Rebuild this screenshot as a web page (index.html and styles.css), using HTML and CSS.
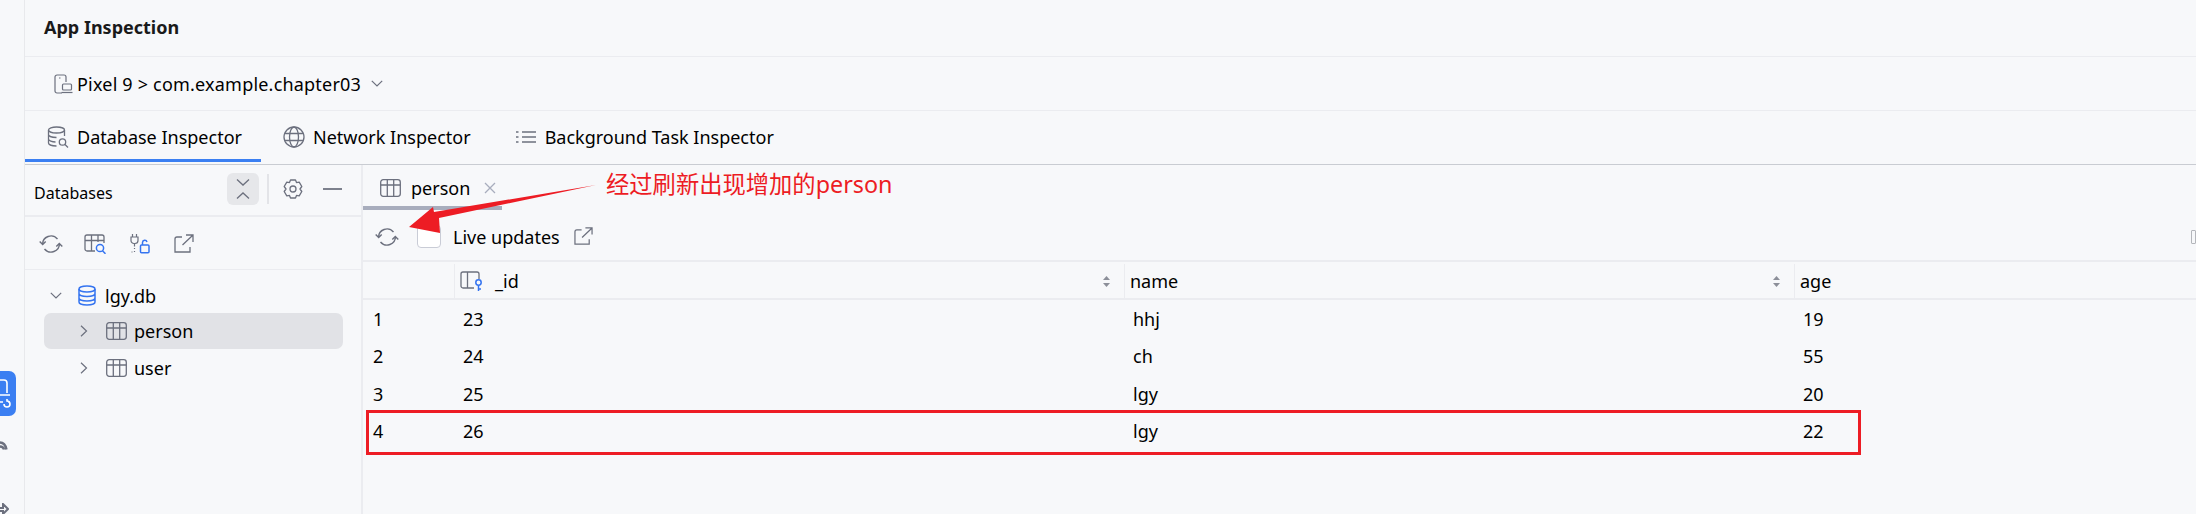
FILE: index.html
```html
<!DOCTYPE html>
<html lang="en">
<head>
<meta charset="utf-8">
<title>App Inspection</title>
<link rel="stylesheet" href="styles.css">
</head>
<body>
<div class="app">
  <aside class="rail">
    <div class="rail-active">
      <svg class="rail-svg" width="16" height="45" viewBox="0 0 16 45"><path d="M0 9h4c2 0 3 1 3 3v10M0 24h10M0 31h3M7 28v2a3 3 0 1 1-3 3M10 31h-2" fill="none" stroke="#fff" stroke-width="1.6"/></svg>
    </div>
    <svg class="rail-icon-a" width="8" height="12" viewBox="0 0 8 12"><path d="M0 2.500c3 0 5.500 2 6.500 7M0 6.500c2 0 3.500 1 4 3" fill="none" stroke="#6c707e" stroke-width="2.400"/></svg>
    <svg class="rail-icon-b" width="9" height="12" viewBox="0 0 9 12"><path d="M0 5h3V1l5 5-5 5V8H0" fill="none" stroke="#6c707e" stroke-width="2"/></svg>
  </aside>

  <main class="main">
    <header class="title-row"><h1 class="title">App Inspection</h1></header>

    <div class="device-row">
      <svg class="ic-device" width="19" height="20" viewBox="0 0 19 20"><path d="M8 19H3a2 2 0 0 1-2-2V3a2 2 0 0 1 2-2h7a2 2 0 0 1 2 2v5M5 4h1.500" fill="none" stroke="#6c707e" stroke-width="1.200"/><rect x="8.500" y="10" width="9" height="6" rx="1" fill="none" stroke="#6c707e" stroke-width="1.200"/><path d="M7.500 18.500h11" stroke="#6c707e" stroke-width="1.200"/></svg>
      <span class="device-text">Pixel 9 &gt; com.example.chapter03</span>
      <svg class="ic-chev" width="12" height="7" viewBox="0 0 12 7"><path d="M.8.8 6 6l5.200-5.200" fill="none" stroke="#6c707e" stroke-width="1.200"/></svg>
    </div>

    <nav class="tabs">
      <div class="tab tab-active">
        <svg width="22" height="22" viewBox="0 0 22 22"><ellipse cx="9.500" cy="4" rx="8" ry="3" fill="none" stroke="#6c707e" stroke-width="1.300"/><path d="M1.500 4v13c0 1.700 3.600 3 8 3M1.500 8.500c0 1.700 3.600 3 8 3M1.500 13c0 1.700 3.600 3 7 3M17.500 4v6" fill="none" stroke="#6c707e" stroke-width="1.300"/><circle cx="15.500" cy="16" r="3.200" fill="#f7f8fa" stroke="#6c707e" stroke-width="1.300"/><path d="m18 18.500 3 3" stroke="#6c707e" stroke-width="1.300"/></svg>
        <span>Database Inspector</span>
      </div>
      <div class="tab">
        <svg width="22" height="22" viewBox="0 0 22 22"><g fill="none" stroke="#6c707e" stroke-width="1.300"><circle cx="11" cy="11" r="10"/><ellipse cx="11" cy="11" rx="4.500" ry="10"/><path d="M1.800 7.500h18.400M1.800 14.500h18.400"/></g></svg>
        <span>Network Inspector</span>
      </div>
      <div class="tab">
        <svg width="22" height="22" viewBox="0 0 22 22"><g stroke="#6c707e" stroke-width="1.400"><path d="M1 6h2.500M1 11h2.500M1 16h2.500M7 6h14M7 11h14M7 16h14"/></g></svg>
        <span>Background Task Inspector</span>
      </div>
    </nav>

    <div class="body">
      <section class="left">
        <div class="db-head">
          <span class="db-title">Databases</span>
          <div class="db-actions">
            <span class="collapse"><svg width="14" height="22" viewBox="0 0 14 22"><path d="m1 1.500 6 5.500 6-5.500M1 20.500l6-5.500 6 5.500" fill="none" stroke="#6c707e" stroke-width="1.300"/></svg></span>
            <span class="vsep"></span>
            <svg class="ic-gear" width="20" height="20" viewBox="0 0 20 20"><path d="M7.500 1h5l1 2.600 2.700-.5L18.800 7.500 17 10l1.800 2.500-2.600 4.400-2.700-.5-1 2.600h-5l-1-2.600-2.700.5-2.600-4.400L3 10 1.200 7.500l2.600-4.400 2.700.5z" fill="none" stroke="#6c707e" stroke-width="1.300" stroke-linejoin="round"/><circle cx="10" cy="10" r="3" fill="none" stroke="#6c707e" stroke-width="1.300"/></svg>
            <span class="minus"></span>
          </div>
        </div>
        <div class="db-tools">
          <svg width="24" height="20" viewBox="0 0 24 20"><path d="M3.500 10.500a8.500 8.500 0 0 1 15-5.500M20.500 9.500a8.500 8.500 0 0 1-15 5.500M.7 7.500l3 3 3-3M17.300 12.500l3-3 3 3" fill="none" stroke="#6c707e" stroke-width="1.400"/></svg>
          <svg width="23" height="20" viewBox="0 0 23 20"><path d="M11 17H3a2 2 0 0 1-2-2V3a2 2 0 0 1 2-2h15a2 2 0 0 1 2 2v6M1 6.500h19M7.500 1v16M14 1v7" fill="none" stroke="#6c707e" stroke-width="1.300"/><circle cx="16" cy="14" r="3.600" fill="none" stroke="#3574f0" stroke-width="1.500"/><path d="m18.500 16.800 3 3" stroke="#3574f0" stroke-width="1.500"/></svg>
          <svg width="20" height="20" viewBox="0 0 20 20"><path d="M2.500 0v3M6.500 0v3M1 3h7v3.500a3 3 0 0 1-3 3h-1a3 3 0 0 1-3-3zM4.500 9.500v3M4.500 14v1M4.500 17v1M1.500 18h1" fill="none" stroke="#6c707e" stroke-width="1.200"/><rect x="10.500" y="11" width="8.500" height="7.800" rx="1" fill="none" stroke="#3574f0" stroke-width="1.500"/><path d="M12.500 11V8.500a2.300 2.300 0 0 1 4.500-.5" fill="none" stroke="#3574f0" stroke-width="1.500"/></svg>
          <svg width="20" height="20" viewBox="0 0 20 20"><path d="M8 3H3a2 2 0 0 0-2 2v13h15v-5M8.500 11 19 1M12 1h7v7" fill="none" stroke="#6c707e" stroke-width="1.300"/></svg>
        </div>
        <div class="tree">
          <div class="node node-db">
            <svg class="chev" width="12" height="7" viewBox="0 0 12 7"><path d="M.8.8 6 6l5.200-5.200" fill="none" stroke="#6c707e" stroke-width="1.200"/></svg>
            <svg width="18" height="21" viewBox="0 0 18 21"><g fill="none" stroke="#3574f0" stroke-width="1.500"><ellipse cx="9" cy="4" rx="8" ry="3"/><path d="M1 4v13c0 1.700 3.600 3 8 3s8-1.300 8-3V4M1 8.500c0 1.700 3.600 3 8 3s8-1.300 8-3M1 13c0 1.700 3.600 3 8 3s8-1.300 8-3"/></g></svg>
            <span>lgy.db</span>
          </div>
          <div class="node node-table node-selected">
            <svg class="chev-r" width="8" height="12" viewBox="0 0 8 12"><path d="m1 .8 5.500 5.200L1 11.200" fill="none" stroke="#6c707e" stroke-width="1.200"/></svg>
            <svg class="ic-table" width="21" height="18" viewBox="0 0 21 18"><use href="#tbl"/></svg>
            <span>person</span>
          </div>
          <div class="node node-table">
            <svg class="chev-r" width="8" height="12" viewBox="0 0 8 12"><path d="m1 .8 5.500 5.200L1 11.200" fill="none" stroke="#6c707e" stroke-width="1.200"/></svg>
            <svg class="ic-table" width="21" height="18" viewBox="0 0 21 18"><use href="#tbl"/></svg>
            <span>user</span>
          </div>
        </div>
      </section>

      <section class="right">
        <div class="doc-tabs">
          <div class="doc-tab">
            <svg class="ic-table" width="21" height="18" viewBox="0 0 21 18"><use href="#tbl"/></svg>
            <span>person</span>
            <svg class="ic-close" width="12" height="12" viewBox="0 0 12 12"><path d="m1 1 10 10M11 1 1 11" stroke="#a8adbd" stroke-width="1.300"/></svg>
          </div>
        </div>
        <div class="doc-tools">
          <svg width="24" height="20" viewBox="0 0 24 20"><path d="M3.500 10.500a8.500 8.500 0 0 1 15-5.500M20.500 9.500a8.500 8.500 0 0 1-15 5.500M.7 7.500l3 3 3-3M17.300 12.500l3-3 3 3" fill="none" stroke="#6c707e" stroke-width="1.400"/></svg>
          <span class="checkbox"></span>
          <span class="live">Live updates</span>
          <svg width="19" height="19" viewBox="0 0 20 20"><path d="M8 3H3a2 2 0 0 0-2 2v13h15v-5M8.500 11 19 1M12 1h7v7" fill="none" stroke="#6c707e" stroke-width="1.300"/></svg>
          <span class="handle"></span>
        </div>
        <div class="grid grid-head">
          <div class="cell"></div>
          <div class="cell head-cell">
            <svg class="ic-key" width="24" height="20" viewBox="0 0 24 20"><path d="M14 17H3a2 2 0 0 1-2-2V3a2 2 0 0 1 2-2h14a2 2 0 0 1 2 2v5M7.500 1v16" fill="none" stroke="#6c707e" stroke-width="1.300"/><circle cx="18.500" cy="11.500" r="2.700" fill="none" stroke="#3574f0" stroke-width="1.500"/><path d="M18.500 14.200V20M18.500 18h2.500" stroke="#3574f0" stroke-width="1.500"/></svg>
            <span class="id-label">_id</span>
            <svg class="ic-sort" width="7" height="11" viewBox="0 0 7 11"><path d="M3.500 0 7 4H0zM3.500 11 0 7h7z" fill="#8c8f99"/></svg>
          </div>
          <div class="cell head-cell">
            <span>name</span>
            <svg class="ic-sort" width="7" height="11" viewBox="0 0 7 11"><path d="M3.500 0 7 4H0zM3.500 11 0 7h7z" fill="#8c8f99"/></svg>
          </div>
          <div class="cell head-cell"><span>age</span></div>
        </div>
        <div class="grid row"><div class="cell num">1</div><div class="cell val">23</div><div class="cell val">hhj</div><div class="cell val">19</div></div>
        <div class="grid row"><div class="cell num">2</div><div class="cell val">24</div><div class="cell val">ch</div><div class="cell val">55</div></div>
        <div class="grid row"><div class="cell num">3</div><div class="cell val">25</div><div class="cell val">lgy</div><div class="cell val">20</div></div>
        <div class="grid row"><div class="cell num">4</div><div class="cell val">26</div><div class="cell val">lgy</div><div class="cell val">22</div></div>
      </section>
    </div>
  </main>
</div>

<svg class="defs" width="0" height="0"><defs><g id="tbl" fill="none" stroke="#6c707e" stroke-width="1.300"><rect x=".7" y=".7" width="19.600" height="16.600" rx="2.500"/><path d="M.7 6h19.600M7.300.7v16.600M13.700.7v16.600"/></g></defs></svg>

<div class="note-box"></div>
<svg class="note-arrow" width="200" height="60" viewBox="0 0 200 60"><path d="M2 42 26 22 27 27 189 0 32 33 33 48z" fill="#ed1c24"/></svg>
<div class="note-text">经过刷新出现增加的person</div>
</body>
</html>
```
FILE: styles.css
```css
* { box-sizing: border-box; }
html, body { margin: 0; height: 514px; overflow: hidden; }
body {
  position: relative;
  width: 2196px;
  background: #f7f8fa;
  color: #000;
  font-family: "Noto Sans", "Noto Sans CJK SC", sans-serif;
  font-size: 18px;
}
svg { display: block; flex: none; }
.defs { position: absolute; }

.app { display: flex; height: 514px; }

.rail { width: 25px; flex: none; border-right: 1px solid #e8e9ec; padding-top: 371px; overflow: hidden; }
.rail-active { width: 16px; height: 45px; background: #3b7ff2; border-radius: 0 7px 7px 0; }
.rail-icon-a { margin-top: 24px; }
.rail-icon-b { margin-top: 51px; }

.main { flex: 1; min-width: 0; display: flex; flex-direction: column; }

.title-row { height: 57px; flex: none; border-bottom: 1px solid #ebecf0; padding: 0 0 2px 19px; display: flex; align-items: center; }
.title { margin: 0; font-size: 18px; font-weight: 700; color: #1a1a1a; }

.device-row { height: 54px; flex: none; border-bottom: 1px solid #ebecf0; padding-left: 29px; display: flex; align-items: center; }
.device-text { margin-left: 4px; letter-spacing: 0.2px; }
.ic-chev { margin-left: 10px; }

.tabs { height: 54px; flex: none; display: flex; border-bottom: 1px solid #c9ccd2; padding-bottom: 2px; }
.tab { display: flex; align-items: center; gap: 8px; padding: 3px 22px 0; border-bottom: 3px solid transparent; }
.tab-active { border-bottom-color: #3b7ff2; padding-right: 19px; }

.body { flex: 1; display: flex; min-height: 0; }

.left { width: 338px; flex: none; border-right: 2px solid #ebecf0; display: flex; flex-direction: column; }
.db-head { height: 52px; flex: none; border-bottom: 2px solid #ebecf0; display: flex; align-items: center; justify-content: space-between; padding: 0 19px 2px 9px; }
.db-title { font-size: 16px; margin-top: 7px; }
.db-actions { display: flex; align-items: center; }
.collapse { width: 32px; height: 32px; border-radius: 6px; background: #e6e7ea; display: flex; align-items: center; justify-content: center; }
.vsep { width: 2px; height: 30px; background: #e3e4e8; margin: 0 14px 0 8px; }
.minus { width: 19px; height: 2px; background: #7d818d; margin-left: 20px; }

.db-tools { height: 53px; flex: none; border-bottom: 1px solid #ebecf0; display: flex; align-items: center; padding: 2px 0 0 14px; gap: 21px; }
.db-tools svg:nth-child(3) { margin-left: 2px; }
.db-tools svg:nth-child(4) { margin-left: 3px; }

.tree { padding: 8px 18px 0 19px; }
.node { display: flex; align-items: center; }
.node-db { height: 35px; padding-left: 6px; }
.node-db span { margin-left: 9px; }
.node-db svg + svg { margin-left: 16px; }
.node-table { height: 36px; padding-left: 36px; border-radius: 7px; }
.node-table span { margin-left: 7px; }
.node-table .ic-table { margin-left: 18px; }
.node-selected { background: #e1e2e6; margin-bottom: 1px; }

.right { flex: 1; min-width: 0; display: flex; flex-direction: column; }
.doc-tabs { height: 45px; flex: none; display: flex; }
.doc-tab { width: 139px; display: flex; align-items: center; padding: 5px 0 0 17px; border-bottom: 4px solid #a8adbd; }
.doc-tab span { margin-left: 10px; }
.ic-close { margin-left: 14px; }

.doc-tools { height: 52px; flex: none; border-bottom: 2px solid #ebecf0; display: flex; align-items: center; padding: 3px 0 0 12px; position: relative; }
.checkbox { width: 24px; height: 23px; margin-left: 18px; border: 1.500px solid #c9ccd6; border-radius: 4px; background: #fff; }
.live { margin-left: 12px; margin-right: 14px; }
.handle { margin-left: auto; width: 5px; height: 14px; border: 1px solid #b4b6bb; border-radius: 1px; }

.grid { display: grid; grid-template-columns: 91px 670px 670px 1fr; }
.grid-head { height: 38px; flex: none; border-bottom: 2px solid #ebecf0; }
.row { height: 37.500px; flex: none; }
.cell { display: flex; align-items: center; min-width: 0; }
.head-cell { border-left: 1px solid #ebecf0; height: 34px; margin-top: 2px; padding-left: 5px; font-size: 18px; }
.id-label { margin-left: 11px; }
.ic-sort { margin-left: auto; margin-right: 14px; }
.num { padding-left: 10px; }
.val { padding-left: 9px; }

.note-box { position: absolute; left: 366px; top: 410px; width: 1495px; height: 45px; border: 3px solid #ed1c24; }
.note-arrow { position: absolute; left: 407px; top: 185px; }
.note-text { position: absolute; left: 606px; top: 168px; font-size: 23.300px; line-height: 32px; color: #ed1c24; white-space: nowrap; }
```
